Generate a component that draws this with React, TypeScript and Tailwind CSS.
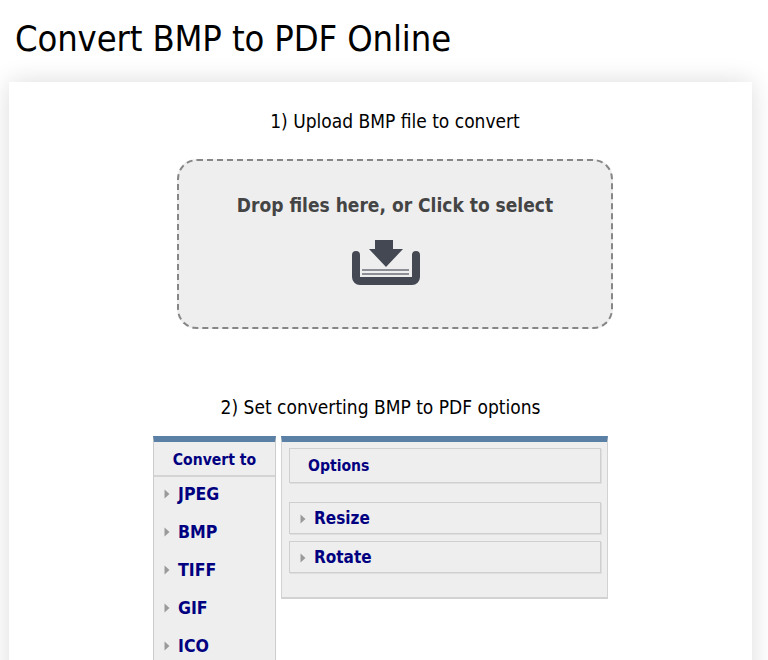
const tahoma = "font-['DejaVu_Sans'] [font-stretch:condensed]";

function Arrow() {
  return (
    <svg width="6" height="10" viewBox="0 0 6 10" className="shrink-0">
      <path d="M0.5 0.5 L5.5 5 L0.5 9.5 Z" fill="#9a9a9a" />
    </svg>
  );
}

function UploadIcon() {
  return (
    <svg width="70" height="46" viewBox="0 0 70 46">
      <path d="M24 0 H42 V9 H52 L35 27 L18 9 H24 Z" fill="#434852" />
      <path d="M5 15 V37 a4 4 0 0 0 4 4 H61 a4 4 0 0 0 4 -4 V15" fill="none" stroke="#434852" strokeWidth="8" strokeLinecap="round" />
      <rect x="11" y="29" width="47" height="2" fill="#8b8e95" />
      <rect x="11" y="33" width="47" height="2" fill="#8b8e95" />
    </svg>
  );
}

const formats = ['JPEG', 'BMP', 'TIFF', 'GIF', 'ICO'];

export default function App() {
  return (
    <div className={`h-[660px] overflow-hidden bg-white ${tahoma}`}>
      <h1 className="pl-[15px] pt-[16px] h-[82px] text-[36px] leading-[46px] tracking-[-0.12px] text-black">Convert BMP to PDF Online</h1>
      <div className="mx-[9px] w-[743px] bg-white shadow-[0_0_24px_rgba(0,0,0,0.14)] flex flex-col items-center h-[700px]">
        <p className="mt-[26px] ml-[29px] text-[19px] leading-[26px] text-black">1) Upload BMP file to convert</p>
        <div className="mt-[25px] ml-[28px] w-[436px] h-[170px] rounded-[20px] border-2 border-dashed border-[#868686] bg-[#eeeeee] flex flex-col items-center">
          <p className="mt-[30px] ml-[1px] text-[19px] leading-[28px] font-bold text-[#444444]">Drop files here, or Click to select</p>
          <div className="mt-[21px] mr-[17px]"><UploadIcon /></div>
        </div>
        <p className="mt-[65px] text-[19px] leading-[26px] text-black">2) Set converting BMP to PDF options</p>
        <div className="mt-[16px] flex items-start gap-[5px] w-[455px]">
          <div className="w-[123px] h-[300px] shrink-0 border-x border-[#cccccc] border-t-[6px] border-t-[#5b80a5] bg-[#eeeeee]">
            <div className="h-[35px] border-b-2 border-[#d4d4d4] flex items-center justify-center pt-[4px] text-[15.6px] font-bold text-[#000080]">Convert to</div>
            <div className="-mt-[2px] flex flex-col">
              {formats.map(f => (
                <div key={f} className="h-[38px] flex items-center gap-[8px] pl-[10px] text-[17.6px] font-bold text-[#000080]">
                  <Arrow />
                  {f}
                </div>
              ))}
            </div>
          </div>
          <div className="w-[327px] h-[163px] border-x border-b-2 border-[#d2d2d2] border-t-[6px] border-t-[#5b80a5] bg-[#eeeeee] pl-[7px] pr-[6px] pt-[6px]">
            <div className="h-[35px] border border-[#cfcfcf] shadow-[1px_1px_0_#dfdfdf] flex items-center pl-[18px] pt-[2px] text-[15.6px] font-bold text-[#000080]">Options</div>
            <div className="mt-[19px] h-[32px] border border-[#cfcfcf] shadow-[1px_1px_0_#dfdfdf] flex items-center gap-[8px] pl-[10px] pt-[1px] text-[17px] font-bold text-[#000080]">
              <Arrow />
              Resize
            </div>
            <div className="mt-[7px] h-[32px] border border-[#cfcfcf] shadow-[1px_1px_0_#dfdfdf] flex items-center gap-[8px] pl-[10px] pt-[1px] text-[17px] font-bold text-[#000080]">
              <Arrow />
              Rotate
            </div>
          </div>
        </div>
      </div>
    </div>
  );
}
